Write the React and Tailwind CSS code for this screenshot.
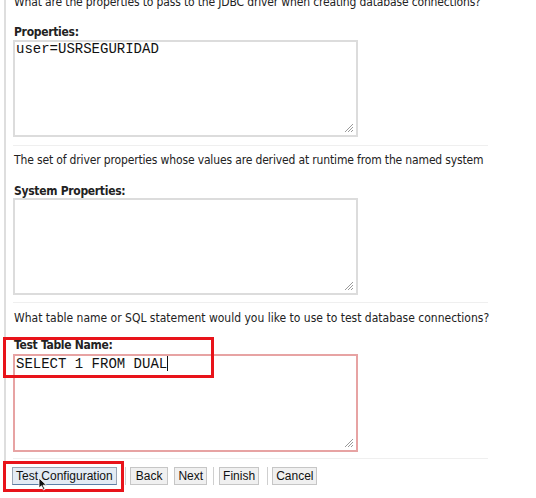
import React from "react";

const body = { fontFamily: '"DejaVu Sans Condensed", "DejaVu Sans", sans-serif', letterSpacing: "-0.15px" };
const mono = { fontFamily: '"Liberation Mono", monospace', letterSpacing: "0px" };
const btnFont = { fontFamily: '"Liberation Sans", Arial, sans-serif', letterSpacing: "0px" };
const bold = { letterSpacing: "-0.3px" };

function Grip() {
  return (
    <svg className="absolute right-[2px] bottom-[2px]" width="10" height="10" viewBox="0 0 10 10">
      <path d="M9 1 L1 9 M9 4 L4 9 M9 7 L7 9" stroke="#9a9a9a" strokeWidth="1" />
    </svg>
  );
}

function Area({ children, red, h }) {
  return (
    <div
      className={`relative w-[345px] ${h} bg-white ${red ? "border-2 border-[#e7a3a3]" : "border-2 border-[#dcdcdc]"} pl-[1px] text-[14px] leading-[14px] text-[#111]`}
      style={mono}
    >
      {children}
      <Grip />
    </div>
  );
}

function Sep() {
  return <div className="h-px w-[475px] bg-[#efefef]" />;
}

function Btn({ children, active, className = "" }) {
  return (
    <button
      className={`h-[18px] px-[3px] text-[12px] leading-[14px] text-[#111] border ${active ? "border-[#9aa6b5] border-b-[#5d7fa8] bg-[#e3ebf4]" : "border-[#c6c6c6] bg-[#f0f0f0]"} ${className}`}
      style={btnFont}
    >
      {children}
    </button>
  );
}

function Bar({ className = "" }) {
  return <div className={`w-px h-[18px] bg-[#cfcfcf] ${className}`} />;
}

export default function App() {
  return (
    <div className="relative w-[536px] h-[498px] overflow-hidden bg-white" style={body}>
      <div className="ml-[4px] h-full border-l-2 border-[#dedede] pl-[7px] text-[#222]">
        <div className="-mt-[6px] pl-[1px] text-[12px] leading-[16px] whitespace-nowrap">
          What are the properties to pass to the JDBC driver when creating database connections?
        </div>
        <div className="mt-[15px] pl-[1px] text-[12px] leading-[15px] font-bold" style={bold}>Properties:</div>
        <Area h="h-[97px]">user=USRSEGURIDAD</Area>
        <div className="mt-[8px]"><Sep /></div>
        <div className="mt-[6px] pl-[1px] text-[12px] leading-[16px] whitespace-nowrap">
          The set of driver properties whose values are derived at runtime from the named system
        </div>
        <div className="mt-[16px] pl-[1px] text-[12px] leading-[14px] font-bold" style={bold}>System Properties:</div>
        <Area h="h-[97px]" />
        <div className="mt-[7px]"><Sep /></div>
        <div className="mt-[7px] pl-[1px] text-[12px] leading-[16px] whitespace-nowrap" style={{ letterSpacing: "0px" }}>
          What table name or SQL statement would you like to use to test database connections?
        </div>
        <div className="mt-[12px] pl-[1px] text-[12px] leading-[14px] font-bold" style={bold}>Test Table Name:</div>
        <div className="mt-[2px]">
          <Area red h="h-[98px]">
            <span>SELECT 1 FROM DUAL</span>
            <span className="inline-block w-px h-[15px] bg-[#111] align-[-3px]" />
          </Area>
        </div>
        <div className="mt-[6px]"><Sep /></div>
        <div className="mt-[8px] flex items-center -ml-[1px]">
          <Btn active>Test Configuration</Btn>
          <Bar className="ml-[8px]" />
          <Btn className="ml-[4px] px-[5px]">Back</Btn>
          <Btn className="ml-[6px]">Next</Btn>
          <Bar className="ml-[6px]" />
          <Btn className="ml-[5px]">Finish</Btn>
          <Bar className="ml-[8px]" />
          <Btn className="ml-[4px]">Cancel</Btn>
        </div>
      </div>

      <div className="absolute left-[3px] top-[337px] w-[211px] h-[41px] border-[3px] border-[#e8131a]" />
      <div className="absolute left-[3px] top-[461px] w-[121px] h-[31px] border-[3px] border-[#e8131a]" />

      <svg className="absolute left-[38px] top-[477px]" width="10" height="14" viewBox="0 0 10 14">
        <path d="M1 1 L1 11 L3.5 8.8 L5.5 13 L7 12.3 L5 8.2 L8.5 8.2 Z" fill="#111" stroke="#fff" strokeWidth="0.8" />
      </svg>
    </div>
  );
}
